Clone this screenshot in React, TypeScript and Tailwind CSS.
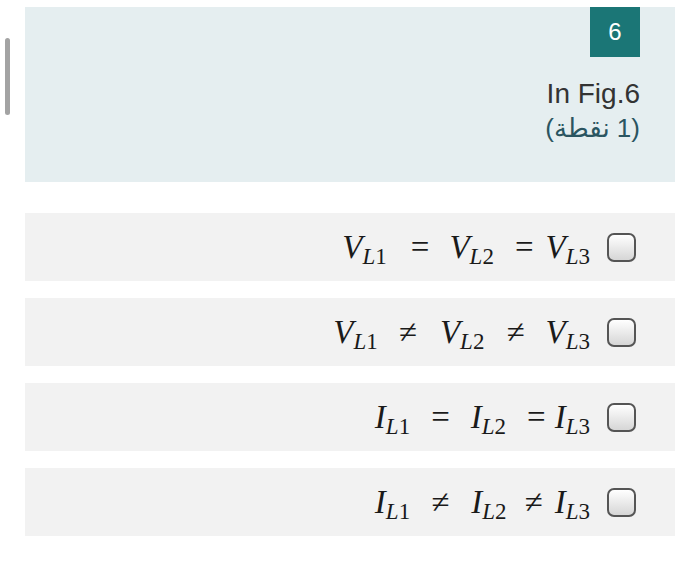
import React from 'react';

type Tok = { kind: 'var' | 'op'; base?: string; sub?: string; num?: string; op?: string; ml: string };

// math-looking variable: italic base with italic letter + upright digit subscript
const Var = ({ base, sub, num }: { base: string; sub: string; num: string }) => (
  <span className="inline-flex items-baseline">
    <span className="italic text-[33px]">{base}</span>
    <span className="relative top-[6px] text-[23px]">
      <span className="italic">{sub}</span>
      <span>{num}</span>
    </span>
  </span>
);

const rows: Tok[][] = [
  [
    { kind: 'var', base: 'V', sub: 'L', num: '1', ml: 'ml-0' },
    { kind: 'op', op: '=', ml: 'ml-[24px]' },
    { kind: 'var', base: 'V', sub: 'L', num: '2', ml: 'ml-[20px]' },
    { kind: 'op', op: '=', ml: 'ml-[21px]' },
    { kind: 'var', base: 'V', sub: 'L', num: '3', ml: 'ml-[12px]' },
  ],
  [
    { kind: 'var', base: 'V', sub: 'L', num: '1', ml: 'ml-0' },
    { kind: 'op', op: '≠', ml: 'ml-[21px]' },
    { kind: 'var', base: 'V', sub: 'L', num: '2', ml: 'ml-[23px]' },
    { kind: 'op', op: '≠', ml: 'ml-[22px]' },
    { kind: 'var', base: 'V', sub: 'L', num: '3', ml: 'ml-[21px]' },
  ],
  [
    { kind: 'var', base: 'I', sub: 'L', num: '1', ml: 'ml-0' },
    { kind: 'op', op: '=', ml: 'ml-[21px]' },
    { kind: 'var', base: 'I', sub: 'L', num: '2', ml: 'ml-[21px]' },
    { kind: 'op', op: '=', ml: 'ml-[21px]' },
    { kind: 'var', base: 'I', sub: 'L', num: '3', ml: 'ml-[9px]' },
  ],
  [
    { kind: 'var', base: 'I', sub: 'L', num: '1', ml: 'ml-0' },
    { kind: 'op', op: '≠', ml: 'ml-[21px]' },
    { kind: 'var', base: 'I', sub: 'L', num: '2', ml: 'ml-[22px]' },
    { kind: 'op', op: '≠', ml: 'ml-[18px]' },
    { kind: 'var', base: 'I', sub: 'L', num: '3', ml: 'ml-[12px]' },
  ],
];

export default function App() {
  return (
    <div className="w-[700px] h-[580px] bg-white flex overflow-hidden">
      {/* left scroll indicator */}
      <div className="w-[25px] shrink-0 pt-[38px] pl-[5px]">
        <div className="w-[5px] h-[77px] rounded-full bg-[#a3a3a3]" />
      </div>

      <div className="w-[650px] pt-[7px]">
        {/* question header */}
        <div className="h-[175px] bg-[#e5eef0] flex flex-col items-end pr-[35px]">
          <div className="w-[50px] h-[50px] bg-[#1b7676] text-white flex items-center justify-center text-[24px] font-['Liberation_Sans',sans-serif]">
            6
          </div>
          <div className="mt-[19px] text-[28px] leading-[35px] text-[#333333] font-['Liberation_Sans',sans-serif]">
            In Fig.6
          </div>
          <div dir="rtl" className="text-[26px] leading-[35px] text-[#2a5561] font-['Liberation_Sans','Noto_Sans','DejaVu_Sans',sans-serif]">
            (1 نقطة)
          </div>
        </div>

        {/* answer options */}
        <div className="mt-[31px] flex flex-col gap-[17px]">
          {rows.map((row, i) => (
            <div key={i} className="h-[68px] bg-[#f2f2f2] flex items-center justify-end pr-[39px]">
              <div className="flex items-baseline text-[#1a1a1a] font-['Liberation_Serif',serif] leading-none">
                {row.map((t, j) =>
                  t.kind === 'var' ? (
                    <span key={j} className={t.ml}>
                      <Var base={t.base!} sub={t.sub!} num={t.num!} />
                    </span>
                  ) : (
                    <span key={j} className={`${t.ml} text-[33px]`}>{t.op}</span>
                  )
                )}
              </div>
              <div className="ml-[17px] w-[29px] h-[29px] rounded-[7px] border-2 border-[#555555] bg-gradient-to-b from-white to-[#d6d6d6]" />
            </div>
          ))}
        </div>
      </div>
    </div>
  );
}
